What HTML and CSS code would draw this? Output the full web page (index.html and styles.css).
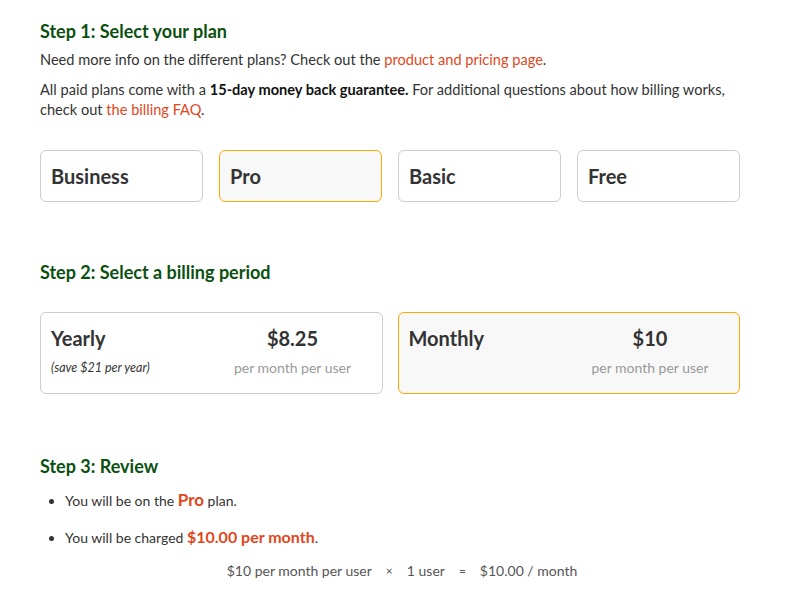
FILE: index.html
```html
<!DOCTYPE html>
<html>
<head>
<meta charset="utf-8">
<link rel="stylesheet" href="styles.css">
</head>
<body>
<div class="page">
  <section class="step">
    <h2 class="step-title">Step 1: Select your plan</h2>
    <p class="text">Need more info on the different plans? Check out the <a class="link" href="#">product and pricing page</a>.</p>
    <p class="text">All paid plans come with a <b class="strong">15-day money back guarantee.</b> For additional questions about how billing works, check out <a class="link" href="#">the billing FAQ</a>.</p>
    <div class="plans">
      <div class="plan">Business</div>
      <div class="plan selected">Pro</div>
      <div class="plan">Basic</div>
      <div class="plan">Free</div>
    </div>
  </section>

  <section class="step step-billing">
    <h2 class="step-title">Step 2: Select a billing period</h2>
    <div class="periods">
      <div class="period">
        <div class="period-left">
          <div class="period-name">Yearly</div>
          <div class="period-note">(save $21 per year)</div>
        </div>
        <div class="period-right">
          <div class="period-price">$8.25</div>
          <div class="period-unit">per month per user</div>
        </div>
      </div>
      <div class="period selected">
        <div class="period-left">
          <div class="period-name">Monthly</div>
          <div class="period-note"></div>
        </div>
        <div class="period-right">
          <div class="period-price">$10</div>
          <div class="period-unit">per month per user</div>
        </div>
      </div>
    </div>
  </section>

  <section class="step step-review">
    <h2 class="step-title">Step 3: Review</h2>
    <ul class="review">
      <li>You will be on the <span class="hl hl-big">Pro</span> plan.</li>
      <li>You will be charged <span class="hl">$10.00 per month</span>.</li>
    </ul>
    <div class="formula">
      <span>$10 per month per user</span>
      <span class="op">×</span>
      <span>1 user</span>
      <span class="op">=</span>
      <span>$10.00 / month</span>
    </div>
  </section>
</div>
</body>
</html>
```

FILE: styles.css
```css
* { box-sizing: border-box; }
html, body { margin: 0; padding: 0; background: #fff; }
body {
  font-family: "Lato", "Noto Sans", sans-serif;
  color: #333;
  font-size: 14px;
}
.page {
  width: 700px;
  margin-left: 40px;
  padding-top: 19px;
}
.step-title {
  margin: 0;
  font-size: 18px;
  font-weight: 700;
  color: #0b5010;
  line-height: 24px;
}
.text {
  margin: 7px 0 0;
  line-height: 20px;
  font-size: 14.6px;
}
.text + .text { margin-top: 10px; }
.link { color: #e2471b; text-decoration: none; }
.strong { color: #111; font-weight: 700; }
.plans {
  display: grid;
  grid-template-columns: repeat(4, 1fr);
  column-gap: 16px;
  margin-top: 30px;
}
.plan {
  height: 52px;
  border: 1px solid #ccc;
  border-radius: 6px;
  padding: 0 10px;
  display: flex;
  align-items: center;
  font-size: 20px;
  font-weight: 700;
  color: #333;
}
.plan.selected, .period.selected { border-color: #ffa800; background: #f8f8f8; }
.step-billing { margin-top: 58px; }
.periods {
  display: grid;
  grid-template-columns: 1fr 1fr;
  column-gap: 15px;
  margin-top: 28px;
}
.period {
  height: 82px;
  border: 1px solid #ccc;
  border-radius: 6px;
  padding: 13px 10px 0;
  display: flex;
}
.period-left { flex: 1; }
.period-right { width: 158px; text-align: center; }
.period-name, .period-price {
  font-size: 20px;
  font-weight: 700;
  line-height: 24px;
  color: #333;
}
.period-note {
  margin-top: 11px;
  font-size: 12.5px;
  font-style: italic;
  line-height: 14px;
}
.period-unit {
  margin-top: 9px;
  font-size: 14px;
  color: #999;
  line-height: 18px;
}
.step-review { margin-top: 60px; }
.review {
  margin: 12px 0 0;
  padding-left: 25px;
}
.review li {
  line-height: 20px;
  margin-bottom: 16px;
}
.review li:last-child { margin-bottom: 13px; }
.hl { color: #e2471b; font-weight: 700; font-size: 16px; }
.hl-big { font-size: 17px; }
.formula {
  display: flex;
  justify-content: center;
  gap: 14px;
  padding-left: 24px;
  margin-top: 0;
  line-height: 20px;
  color: #555;
}
.op { font-size: 12px; }
```
